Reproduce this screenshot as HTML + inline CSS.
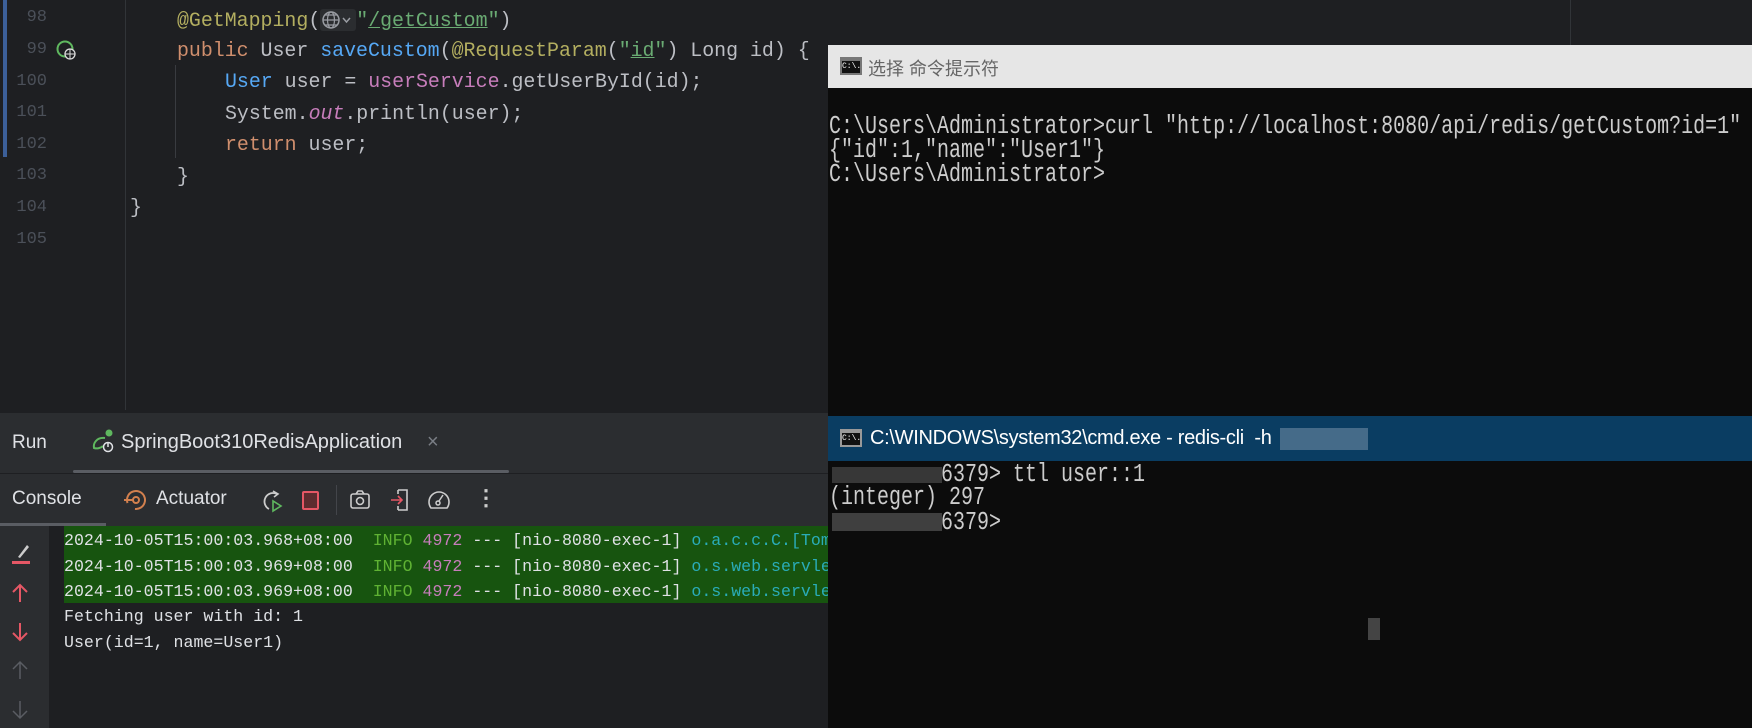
<!DOCTYPE html>
<html><head><meta charset="utf-8"><style>
*{margin:0;padding:0;box-sizing:border-box}
body{width:1752px;height:728px;overflow:hidden;background:#1e1f22;position:relative;font-family:"Liberation Sans",sans-serif}
.a{position:absolute}
.code{font-family:"Liberation Mono",monospace;font-size:19.9px;color:#bcbec4;white-space:pre;line-height:20px}
.ln{font-family:"Liberation Mono",monospace;font-size:17px;color:#4b5059;width:47px;text-align:right;line-height:20px}
.log{font-family:"Liberation Mono",monospace;font-size:16.6px;color:#dfe1e5;white-space:pre;line-height:20px}
.cmd{font-family:"Liberation Mono",monospace;font-size:20px;color:#cccccc;white-space:pre;line-height:20px;transform:scaleY(1.3);transform-origin:left center}
.k{color:#cf8e6d}.an{color:#b3ae60}.s{color:#6aab73}.f{color:#56a8f5}.p{color:#c77dbb}
</style></head><body>
<div class="a" style="left:3px;top:0;width:4px;height:157px;background:#3c5f99"></div>
<div class="a" style="left:125px;top:0;width:1px;height:410px;background:#313438"></div>
<div class="a" style="left:175px;top:65px;width:1px;height:93px;background:#393b40"></div>
<div class="a" style="left:1570px;top:0;width:1px;height:413px;background:#313438"></div>
<div class="a ln" style="top:8px;left:0">98</div>
<div class="a ln" style="top:40px;left:0">99</div>
<div class="a ln" style="top:72px;left:0">100</div>
<div class="a ln" style="top:103px;left:0">101</div>
<div class="a ln" style="top:135px;left:0">102</div>
<div class="a ln" style="top:166px;left:0">103</div>
<div class="a ln" style="top:198px;left:0">104</div>
<div class="a ln" style="top:230px;left:0">105</div>
<svg class="a" style="left:56px;top:39px" width="22" height="22" viewBox="0 0 22 22"><circle cx="9" cy="10" r="7.5" fill="none" stroke="#5fb85f" stroke-width="2"/><circle cx="14" cy="15" r="5" fill="#1e1f22" stroke="#ddd" stroke-width="1.3"/><path d="M9 15h10M14 10v10" stroke="#ddd" stroke-width="1"/></svg>
<div class="a code" style="left:177px;top:9px"><span class="an">@GetMapping</span>(<span style="display:inline-block;width:36px;height:22px;background:#2b2d30;vertical-align:-5px;border-radius:3px"><svg width="36" height="22" viewBox="0 0 36 22"><circle cx="11" cy="11" r="8" fill="none" stroke="#9a9da3" stroke-width="1.5"/><ellipse cx="11" cy="11" rx="3.5" ry="8" fill="none" stroke="#9a9da3" stroke-width="1.2"/><path d="M3 11h16M5 6h12M5 16h12" stroke="#9a9da3" stroke-width="1.2"/><path d="M23 9l3.5 4 3.5-4" fill="none" stroke="#9a9da3" stroke-width="1.5"/></svg></span><span class="s">"<u>/getCustom</u>"</span>)</div>
<div class="a code" style="left:177px;top:41px"><span class="k">public</span> User <span class="f">saveCustom</span>(<span class="an">@RequestParam</span>(<span class="s">"<u>id</u>"</span>) Long id) {</div>
<div class="a code" style="left:225px;top:72px"><span class="f">User</span> user = <span class="p">userService</span>.getUserById(id);</div>
<div class="a code" style="left:225px;top:104px">System.<i class="p">out</i>.println(user);</div>
<div class="a code" style="left:225px;top:135px"><span class="k">return</span> user;</div>
<div class="a code" style="left:177px;top:167px">}</div>
<div class="a code" style="left:130px;top:198px">}</div>
<div class="a" style="left:0;top:413px;width:828px;height:315px;background:#2b2d30"></div>
<div class="a" style="left:0;top:473px;width:828px;height:1px;background:#1e1f22"></div>
<div class="a" style="left:73px;top:470px;width:436px;height:3px;background:#5a5d63;border-radius:2px"></div>
<div class="a" style="left:12px;top:432px;font-size:19px;color:#dfe1e5">Run</div>
<svg class="a" style="left:91px;top:429px" width="24" height="24" viewBox="0 0 24 24"><circle cx="18" cy="4" r="3.5" fill="#5fb85f"/><path d="M14 9C6 8 2 14 3 19c3 1 7 0 9-2" fill="none" stroke="#5fb85f" stroke-width="2"/><circle cx="17" cy="18" r="4.5" fill="none" stroke="#dfe1e5" stroke-width="1.5"/><path d="M17 13v5" stroke="#dfe1e5" stroke-width="1.5"/></svg>
<div class="a" style="left:121px;top:431px;font-size:20px;color:#dfe1e5">SpringBoot310RedisApplication</div>
<div class="a" style="left:427px;top:431px;font-size:20px;color:#7a7e85">×</div>
<div class="a" style="left:12px;top:488px;font-size:19px;color:#dfe1e5">Console</div>
<div class="a" style="left:0;top:523px;width:106px;height:3px;background:#5a5d63"></div>
<svg class="a" style="left:122px;top:488px" width="26" height="24" viewBox="0 0 26 24"><circle cx="14" cy="12" r="9" fill="none" stroke="#d2804e" stroke-width="2" stroke-dasharray="40 10" transform="rotate(200 14 12)"/><circle cx="14" cy="12" r="3" fill="none" stroke="#d2804e" stroke-width="2"/><path d="M2 12h9" stroke="#d2804e" stroke-width="2"/></svg>
<div class="a" style="left:156px;top:488px;font-size:19px;color:#dfe1e5">Actuator</div>
<svg class="a" style="left:260px;top:488px" width="24" height="26" viewBox="0 0 24 26"><path d="M17 6A8 8 0 1 0 9 21" fill="none" stroke="#ccc" stroke-width="1.8"/><path d="M13 3l5 3-4 3" fill="none" stroke="#ccc" stroke-width="1.6"/><path d="M13 13v10l8-5z" fill="none" stroke="#5fb85f" stroke-width="1.6"/></svg>
<div class="a" style="left:302px;top:491px;width:17px;height:19px;border:2px solid #e55765;background:#5c2c2f;border-radius:2px"></div>
<div class="a" style="left:336px;top:485px;width:1px;height:30px;background:#43454a"></div>
<svg class="a" style="left:349px;top:489px" width="22" height="22" viewBox="0 0 22 22"><rect x="2" y="5" width="18" height="14" rx="2" fill="none" stroke="#ccc" stroke-width="1.6"/><path d="M7 5l2-3h4l2 3" fill="none" stroke="#ccc" stroke-width="1.6"/><circle cx="11" cy="12" r="3.5" fill="none" stroke="#ccc" stroke-width="1.6"/></svg>
<svg class="a" style="left:389px;top:488px" width="22" height="24" viewBox="0 0 22 24"><path d="M9 2h9v20H9M9 6V2M9 22v-4" fill="none" stroke="#ccc" stroke-width="1.6"/><path d="M2 12h11M9 8l4 4-4 4" fill="none" stroke="#e55765" stroke-width="1.6"/></svg>
<svg class="a" style="left:427px;top:488px" width="24" height="24" viewBox="0 0 24 24"><path d="M4 20a10 10 0 1 1 16 0z" fill="none" stroke="#ccc" stroke-width="1.6"/><circle cx="11" cy="15" r="2" fill="none" stroke="#ccc" stroke-width="1.5"/><path d="M12 13l4-6" stroke="#ccc" stroke-width="1.5"/></svg>
<div class="a" style="left:475px;top:485px;color:#ccc;font-size:22px;font-weight:bold">⋮</div>
<div class="a" style="left:49px;top:526px;width:779px;height:202px;background:#1e1f22"></div>
<div class="a" style="left:64px;top:526px;width:764px;height:77px;background:#17540f"></div>
<div class="a log" style="left:64px;top:531px">2024-10-05T15:00:03.968+08:00  <span style="color:#5fb233">INFO</span> <span class="p">4972</span> --- [nio-8080-exec-1] <span style="color:#2aacb8">o.a.c.c.C.[Tom</span></div>
<div class="a log" style="left:64px;top:557px">2024-10-05T15:00:03.969+08:00  <span style="color:#5fb233">INFO</span> <span class="p">4972</span> --- [nio-8080-exec-1] <span style="color:#2aacb8">o.s.web.servle</span></div>
<div class="a log" style="left:64px;top:582px">2024-10-05T15:00:03.969+08:00  <span style="color:#5fb233">INFO</span> <span class="p">4972</span> --- [nio-8080-exec-1] <span style="color:#2aacb8">o.s.web.servle</span></div>
<div class="a log" style="left:64px;top:607px">Fetching user with id: 1</div>
<div class="a log" style="left:64px;top:633px">User(id=1, name=User1)</div>
<svg class="a" style="left:10px;top:543px" width="22" height="24" viewBox="0 0 22 24"><path d="M8 14l9-12 2 2-9 11z" fill="#ccc"/><rect x="2" y="18" width="18" height="3" fill="#e55765"/></svg>
<svg class="a" style="left:10px;top:582px" width="20" height="22" viewBox="0 0 20 22"><path d="M10 20V3M3 10l7-7 7 7" fill="none" stroke="#e55765" stroke-width="2"/></svg>
<svg class="a" style="left:10px;top:621px" width="20" height="22" viewBox="0 0 20 22"><path d="M10 2v17M3 12l7 7 7-7" fill="none" stroke="#e55765" stroke-width="2"/></svg>
<svg class="a" style="left:10px;top:659px" width="20" height="22" viewBox="0 0 20 22"><path d="M10 20V3M3 10l7-7 7 7" fill="none" stroke="#5a5d63" stroke-width="1.5"/></svg>
<svg class="a" style="left:10px;top:699px" width="20" height="22" viewBox="0 0 20 22"><path d="M10 2v17M3 12l7 7 7-7" fill="none" stroke="#5a5d63" stroke-width="1.5"/></svg>
<div class="a" style="left:828px;top:45px;width:924px;height:43px;background:#e6e6e6"></div>
<div class="a" style="left:840px;top:57px;width:22px;height:18px;background:#111;border:2px solid #777;border-top-width:4px;color:#fff;font-size:8px;font-family:'Liberation Mono',monospace;line-height:11px">C:\.</div>
<div class="a" style="left:868px;top:55px;font-size:18px;color:#666;font-family:'Liberation Sans','Noto Sans CJK SC',sans-serif">选择 命令提示符</div>
<div class="a" style="left:828px;top:88px;width:924px;height:328px;background:#0c0c0c"></div>
<div class="a cmd" style="left:829px;top:118px">C:\Users\Administrator&gt;curl "http://localhost:8080/api/redis/getCustom?id=1"</div>
<div class="a cmd" style="left:829px;top:142px">{"id":1,"name":"User1"}</div>
<div class="a cmd" style="left:829px;top:166px">C:\Users\Administrator&gt;</div>
<div class="a" style="left:828px;top:416px;width:924px;height:45px;background:#0a3d62"></div>
<div class="a" style="left:840px;top:429px;width:22px;height:18px;background:#111;border:2px solid #999;border-top-width:4px;color:#fff;font-size:8px;font-family:'Liberation Mono',monospace;line-height:11px">C:\.</div>
<div class="a" style="left:870px;top:427px;font-size:20px;color:#fff;letter-spacing:-0.3px">C:\WINDOWS\system32\cmd.exe - redis-cli &nbsp;-h</div>
<div class="a" style="left:1280px;top:428px;width:88px;height:22px;background:#6d8aa3;opacity:.6"></div>
<div class="a" style="left:828px;top:461px;width:924px;height:267px;background:#0c0c0c"></div>
<div class="a" style="left:832px;top:467px;width:110px;height:16px;background:#555;opacity:.6"></div>
<div class="a cmd" style="left:941px;top:466px">6379&gt; ttl user::1</div>
<div class="a cmd" style="left:829px;top:489px">(integer) 297</div>
<div class="a" style="left:832px;top:513px;width:110px;height:18px;background:#555;opacity:.7"></div>
<div class="a cmd" style="left:941px;top:514px">6379&gt;</div>
<div class="a" style="left:1368px;top:618px;width:12px;height:22px;background:#444"></div>
</body></html>
